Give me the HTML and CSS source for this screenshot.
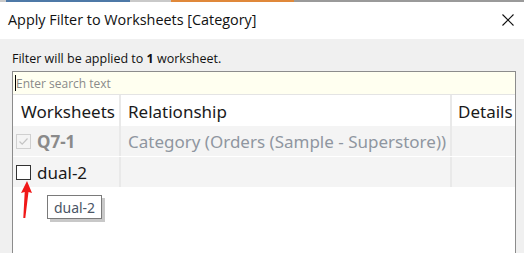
FILE: index.html
```html
<!DOCTYPE html>
<html>
<head>
<meta charset="utf-8">
<link rel="stylesheet" href="styles.css">
</head>
<body>
<div class="strip">
  <span class="s-gap1"></span><span class="s-blue"></span><span class="s-gray1"></span><span class="s-orange"></span><span class="s-rest"></span>
</div>
<div class="titlebar">
  <span class="title">Apply Filter to Worksheets [Category]</span>
  <svg class="close" width="12" height="12" viewBox="0 0 12 12"><path d="M0.5 0.5 L11.5 11.5 M11.5 0.5 L0.5 11.5" stroke="#111" stroke-width="1.1" fill="none"/></svg>
</div>
<div class="content">
  <div class="note">Filter will be applied to <b>1</b> worksheet.</div>
  <div class="box">
    <div class="search"><span class="caret"></span><span class="ph">Enter search text</span></div>
    <div class="row head">
      <div class="c1">Worksheets</div>
      <div class="c2">Relationship</div>
      <div class="c3">Details</div>
    </div>
    <div class="row data">
      <div class="c1"><span class="cb cb-dis"><svg width="13" height="13" viewBox="0 0 13 13"><path d="M2.5 6.5 L5.2 9.2 L10.5 3.5" stroke="#c4c4c4" stroke-width="1.2" fill="none"/></svg></span><span class="name dis">Q7-1</span></div>
      <div class="c2 rel">Category (Orders (Sample - Superstore))</div>
      <div class="c3"></div>
    </div>
    <div class="row data">
      <div class="c1"><span class="cb cb-on"></span><span class="name">dual-2</span></div>
      <div class="c2"></div>
      <div class="c3"></div>
    </div>
  </div>
</div>
<div class="tooltip">dual-2</div>
<svg class="arrow" width="14" height="40" viewBox="0 0 14 40"><path d="M8 0 L13 12 L9.5 11 L6.3 37 L4.3 37 L5.7 11 L2 12 Z" fill="#f01818"/></svg>
</body>
</html>
```
FILE: styles.css
```css
html, body {
  margin: 0;
  padding: 0;
}
body {
  width: 524px;
  height: 253px;
  overflow: hidden;
  background: #f0f0f0;
  position: relative;
  font-family: "Noto Sans", "Open Sans", sans-serif;
}
.strip {
  display: flex;
  height: 2px;
  background: #bdbdbd;
}
.s-gap1 { width: 6px; background: #c9c9c9; }
.s-blue { width: 124px; background: #4e79a7; }
.s-gray1 { width: 41px; background: #c9c9c9; }
.s-orange { width: 123px; background: #e0883a; }
.s-rest { flex: 1; background: #9a9a9a; }
.titlebar {
  height: 37px;
  background: #fff;
  display: flex;
  align-items: center;
  justify-content: space-between;
  padding: 0 10px 0 8px;
}
.title {
  font-family: "Open Sans", "Noto Sans", sans-serif;
  font-size: 14.4px;
  color: #111;
  margin-top: -2px;
}
.close {
  margin-top: -2px;
}
.content {
  padding: 12px 8px 0 12px;
}
.note {
  font-family: "Open Sans", "Noto Sans", sans-serif;
  font-size: 12.5px;
  line-height: 16px;
  color: #111;
  margin-bottom: 4px;
}
.box {
  border: 1px solid #8c8c8c;
  border-bottom: none;
  background: #fff;
  height: 182px;
}
.search {
  height: 22px;
  background: #fffff0;
  border-bottom: 1px solid #e4e4e4;
  display: flex;
  align-items: center;
  padding-left: 2px;
}
.caret {
  width: 1px;
  height: 16px;
  background: #000;
}
.ph {
  font-family: "Open Sans", "Noto Sans", sans-serif;
  font-size: 12px;
  color: #8a8a8a;
}
.row {
  display: flex;
}
.row.head {
  height: 31px;
  background: #fff;
  align-items: stretch;
}
.row.data {
  height: 30px;
  background: #f4f4f4;
  border-top: 1px solid #fff;
}
.row.head + .row.data {
  border-top: none;
}
.c1, .c2, .c3 {
  display: flex;
  align-items: center;
  font-size: 17px;
  color: #1a1a1a;
  white-space: nowrap;
}
.c1 {
  width: 108px;
  border-right: 2px solid #e9e9e9;
  padding-left: 3px;
  box-sizing: border-box;
}
.head .c1 { padding-left: 8px; }
.c2 {
  width: 331px;
  border-right: 2px solid #e9e9e9;
  padding-left: 7px;
  box-sizing: border-box;
}
.c3 {
  flex: 1;
  padding-left: 6px;
  overflow: hidden;
}
.head .c1, .head .c2, .head .c3 {
  padding-top: 1px;
}
.cb {
  width: 15px;
  height: 15px;
  box-sizing: border-box;
  display: inline-flex;
  align-items: center;
  justify-content: center;
  margin-right: 6px;
  background: #fff;
}
.cb-dis {
  border: 1px solid #d0d0d0;
  background: #f4f4f4;
}
.cb-on {
  border: 1px solid #333;
}
.name {
  color: #1a1a1a;
}
.name.dis {
  color: #8a8a8a;
  font-weight: bold;
}
.rel {
  color: #8f96a0;
}
.tooltip {
  position: absolute;
  left: 47px;
  top: 195px;
  width: 55px;
  height: 24px;
  box-sizing: border-box;
  border: 1px solid #7a7a7a;
  background: #fff;
  box-shadow: 3px 3px 0 #c8c8c8;
  font-size: 14px;
  color: #4b5566;
  display: flex;
  align-items: center;
  justify-content: center;
}
.arrow {
  position: absolute;
  left: 19px;
  top: 181px;
}
```
